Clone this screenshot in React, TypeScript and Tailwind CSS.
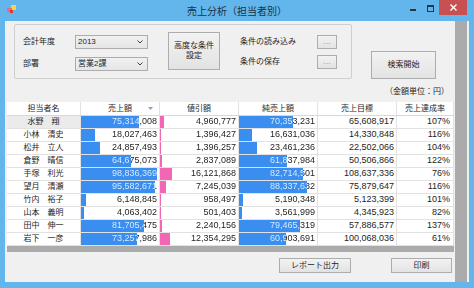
import type { ReactNode } from "react";

type Row = {
  name: string;
  sales: number;
  discount: number;
  net: number;
  target: number;
};

const rows: Row[] = [
  { name: "水野　翔", sales: 75314008, discount: 4960777, net: 70353231, target: 65608917 },
  { name: "小林　清史", sales: 18027463, discount: 1396427, net: 16631036, target: 14330848 },
  { name: "松井　立人", sales: 24857493, discount: 1396257, net: 23461236, target: 22502066 },
  { name: "倉野　晴信", sales: 64675073, discount: 2837089, net: 61837984, target: 50506866 },
  { name: "手塚　利光", sales: 98836369, discount: 16121868, net: 82714501, target: 108637336 },
  { name: "望月　清瀬", sales: 95582671, discount: 7245039, net: 88337632, target: 75879647 },
  { name: "竹内　裕子", sales: 6148845, discount: 958497, net: 5190348, target: 5123399 },
  { name: "山本　義明", sales: 4063402, discount: 501403, net: 3561999, target: 4345923 },
  { name: "田中　伸一", sales: 81705475, discount: 2240156, net: 79465319, target: 57886577 },
  { name: "岩下　一彦", sales: 73257986, discount: 12354295, net: 60903691, target: 100068036 },
];

// px per yen for the in-cell bars
const SCALE = 0.77e-6;

const fmt = (n: number) => n.toLocaleString("en-US");

const Button = ({ className, children }: { className: string; children?: ReactNode }) => (
  <div
    className={`flex items-center justify-center border border-[#adadad] bg-linear-to-b from-[#f2f2f2] to-[#e3e3e3] text-[8px] leading-[10px] text-[#1e1e1e] text-center ${className}`}
  >
    {children}
  </div>
);

const Combo = ({ value }: { value: string }) => (
  <div className="flex h-[14px] w-[73px] items-center border border-[#acacac] bg-linear-to-b from-[#f0f0f0] to-[#e6e6e6] pl-[2px] pr-[4px] text-[8px] text-[#1e1e1e]">
    <span className="flex-1">{value}</span>
    <svg width="6" height="4" viewBox="0 0 6 4">
      <path d="M0.5 0.5 L3 3 L5.5 0.5" fill="none" stroke="#404040" strokeWidth="1" />
    </svg>
  </div>
);

// bar under the value; the part of the text over the bar turns light
const BarCell = ({ value, color }: { value: number; color: string }) => {
  const barW = Math.max(1, Math.round(value * SCALE));
  return (
    <div className="relative h-full w-[79px] border-r border-[#e2e2e2]">
      <div className={`absolute inset-y-0 left-0 ${color}`} style={{ width: barW }} />
      <div
        className="relative flex h-full w-full items-center justify-end bg-clip-text pr-[2px] text-[9px] text-transparent"
        style={{ backgroundImage: `linear-gradient(to right, #e6f2ff ${barW}px, #1e1e1e ${barW}px)` }}
      >
        {fmt(value)}
      </div>
    </div>
  );
};

const NumCell = ({ children, w = "w-[79px]", pr = "pr-[2px]" }: { children: ReactNode; w?: string; pr?: string }) => (
  <div className={`flex h-full items-center justify-end border-r border-[#e2e2e2] ${w} ${pr} text-[9px] text-[#1e1e1e]`}>
    {children}
  </div>
);

const headers = [
  { label: "担当者名", w: "w-[74px]" },
  { label: "売上額", w: "w-[79px]", sort: true },
  { label: "値引額", w: "w-[79px]" },
  { label: "純売上額", w: "w-[79px]" },
  { label: "売上目標", w: "w-[79px]" },
  { label: "売上達成率", w: "w-[57px]" },
];

const TitleBar = () => (
  <div className="relative flex h-[21px] items-center justify-center">
    <svg className="absolute left-[7px] top-[5px]" width="10" height="9" viewBox="0 0 10 9">
      <rect x="4" y="0" width="5" height="5" fill="#f7d44a" />
      <rect x="0" y="3" width="5" height="4" fill="#e86a8a" />
      <rect x="3" y="5" width="3" height="3" fill="#d83a3a" />
    </svg>
    <span className="text-[10px] text-[#1f3040] font-['Noto_Sans_CJK_JP',sans-serif]">売上分析（担当者別）</span>
    <div className="absolute right-[7px] top-0 flex items-start">
      <div className="mt-[9px] h-[2px] w-[6px] bg-[#2a3540]" />
      <div className="ml-[11px] mt-[5px] h-[7px] w-[7px] border border-t-2 border-[#2a3540]" />
      <div className="ml-[5px] flex h-[15px] w-[28px] items-center justify-center bg-[#c75050]">
        <svg width="7" height="7" viewBox="0 0 7 7">
          <path d="M0.5 0.5 L6.5 6.5 M6.5 0.5 L0.5 6.5" stroke="#ffffff" strokeWidth="1.4" />
        </svg>
      </div>
    </div>
  </div>
);

export default function App() {
  return (
    <div className="flex h-[288px] w-[474px] flex-col overflow-hidden bg-[#63b6ec] font-['Liberation_Sans','Noto_Sans_CJK_JP',sans-serif]">
      <TitleBar />
      <div className="mx-[5px] flex h-[261px] bg-[#f0f0f0]">
        <div className="flex w-[450px] flex-col">
          {/* conditions */}
          <div className="flex items-start">
            <div className="ml-[9px] mt-[3px] flex h-[55px] w-[338px] items-start rounded-[2px] border border-[#cfcfcf]">
              <div className="ml-[8px] mt-[10px] flex flex-col gap-[8px]">
                <div className="flex items-center">
                  <span className="w-[52px] text-[8px] text-[#1e1e1e]">会計年度</span>
                  <Combo value="2013" />
                </div>
                <div className="flex items-center">
                  <span className="w-[52px] text-[8px] text-[#1e1e1e]">部署</span>
                  <Combo value="営業2課" />
                </div>
              </div>
              <Button className="ml-[20px] mt-[7px] h-[38px] w-[52px] px-[2px]">
                高度な条件
                <br />
                設定
              </Button>
              <div className="ml-[20px] mt-[10px] flex flex-col gap-[6px]">
                <div className="flex items-center">
                  <span className="w-[77px] text-[8px] text-[#1e1e1e]">条件の読み込み</span>
                  <Button className="h-[14px] w-[20px] text-[#7a7a7a]">…</Button>
                </div>
                <div className="flex items-center">
                  <span className="w-[77px] text-[8px] text-[#1e1e1e]">条件の保存</span>
                  <Button className="h-[14px] w-[20px] text-[#7a7a7a]">…</Button>
                </div>
              </div>
            </div>
            <Button className="ml-[19px] mt-[30px] h-[28px] w-[65px]">検索開始</Button>
          </div>

          <div className="mt-[8px] flex h-[10px] justify-end pr-[6px] text-[8px] leading-[10px] text-[#1e1e1e]">
            （金額単位：円）
          </div>

          {/* grid */}
          <div className="ml-[2px] mt-[5px] h-[150px] w-[447px] bg-[#ababab]">
            <div className="flex h-[14px] border-b border-[#d8d8d8] bg-white">
              {headers.map((h) => (
                <div
                  key={h.label}
                  className={`relative flex h-full items-center justify-center border-r border-[#e2e2e2] ${h.w} text-[8px] text-[#1e1e1e]`}
                >
                  {h.label}
                  {h.sort && (
                    <svg className="absolute right-[6px] top-[5px]" width="5" height="3" viewBox="0 0 5 3">
                      <path d="M0 0 L5 0 L2.5 3 Z" fill="#7aa6d6" />
                    </svg>
                  )}
                </div>
              ))}
            </div>
            {rows.map((r, i) => (
              <div key={r.name} className="flex h-[13px] border-b border-[#e2e2e2] bg-white">
                <div
                  className={`flex h-full w-[74px] items-center justify-center border-r border-[#e2e2e2] text-[8px] text-[#1e1e1e] ${
                    i === 0 ? "bg-[#ebebeb]" : "bg-white"
                  }`}
                >
                  {r.name}
                </div>
                <BarCell value={r.sales} color="bg-[#3a8eef]" />
                <BarCell value={r.discount} color="bg-[#f266b4]" />
                <BarCell value={r.net} color="bg-[#3a8eef]" />
                <NumCell>{fmt(r.target)}</NumCell>
                <NumCell w="w-[57px]" pr="pr-[3px]">
                  {Math.round((r.net / r.target) * 100)}%
                </NumCell>
              </div>
            ))}
          </div>

          {/* actions */}
          <div className="ml-[274px] mt-[6px] flex gap-[40px]">
            <Button className="h-[15px] w-[72px]">レポート出力</Button>
            <Button className="h-[15px] w-[61px]">印刷</Button>
          </div>
        </div>
        <div className="w-[12px] bg-[#ababab]" />
      </div>
    </div>
  );
}
